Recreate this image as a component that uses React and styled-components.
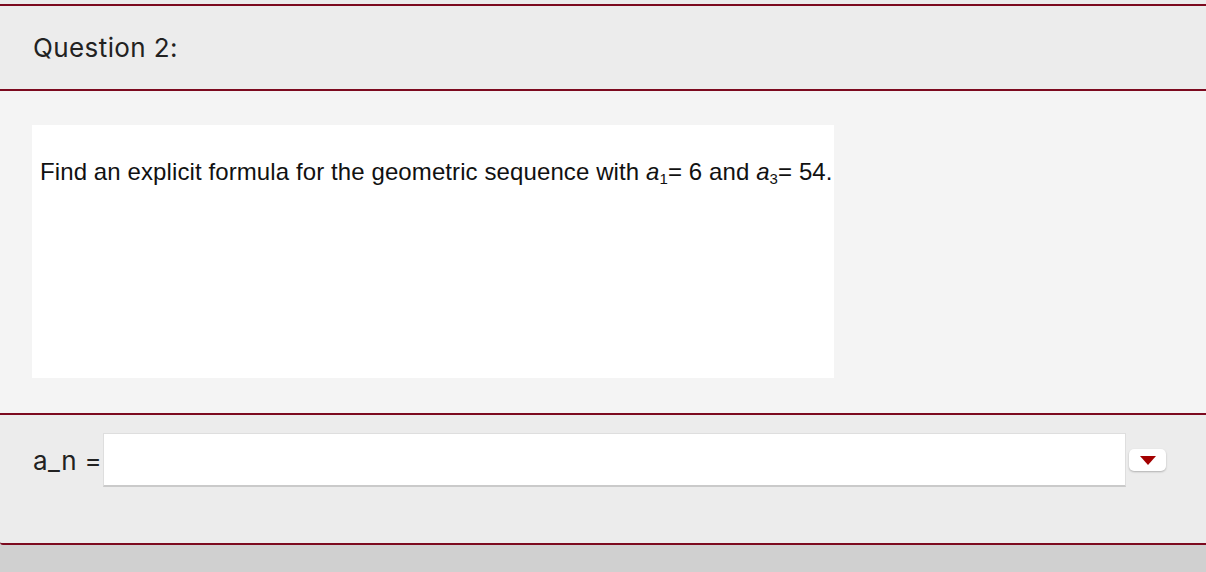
import React from 'react';
import styled, { createGlobalStyle } from 'styled-components';

const GlobalStyle = createGlobalStyle`
  html, body {
    margin: 0;
    padding: 0;
    background: #d0d0d0;
  }
`;

const Page = styled.div`
  min-height: 572px;
  padding-top: 4px;
  background: linear-gradient(to bottom, #ececec 0, #ececec 4px, #d0d0d0 4px);
  box-sizing: border-box;
`;

const Card = styled.section`
  border-top: 2px solid #7c0a1f;
  border-bottom: 2px solid #7c0a1f;
  border-radius: 0 0 0 3px;
  overflow: hidden;
`;

const Header = styled.header`
  height: 83px;
  display: flex;
  align-items: center;
  padding-left: 33px;
  background: #ececec;
  border-bottom: 2px solid #7c0a1f;
  font-family: Inter, 'Noto Sans', sans-serif;
  font-size: 26px;
  letter-spacing: 0.4px;
  color: #222;
`;

const Body = styled.div`
  background: #f4f4f4;
  padding: 34px 0 35px 32px;
  border-bottom: 2px solid #7c0a1f;
`;

const Prompt = styled.div`
  width: 802px;
  height: 253px;
  box-sizing: border-box;
  background: #fff;
  padding: 34px 8px 0;
  font-family: 'Liberation Sans', Arial, sans-serif;
  font-size: 24px;
  letter-spacing: 0.1px;
  color: #111;
  line-height: 26px;
  white-space: nowrap;

  i {
    font-style: italic;
  }
  sub {
    font-size: 15px;
    vertical-align: -4px;
    line-height: 0;
  }
`;

const Footer = styled.div`
  height: 128px;
  box-sizing: border-box;
  background: #ececec;
  padding: 18px 0 0 33px;
  display: flex;
  align-items: flex-start;
`;

const AnswerRow = styled.div`
  display: flex;
  align-items: center;
`;

const Label = styled.span`
  font-family: Inter, 'Noto Sans', sans-serif;
  font-size: 26px;
  letter-spacing: 0.4px;
  color: #222;
  margin-right: 1px;
`;

const AnswerInput = styled.input`
  width: 1023px;
  height: 54px;
  box-sizing: border-box;
  background: #fff;
  border: 1px solid #dedede;
  border-bottom: 2px solid #cacaca;
  outline: none;
  font-size: 20px;
  padding: 0 8px;
`;

const DropButton = styled.button`
  width: 37px;
  height: 22px;
  margin-left: 3px;
  border: none;
  border-radius: 5px;
  background: #fff;
  box-shadow: 0 1px 2px rgba(0, 0, 0, 0.25);
  display: flex;
  align-items: center;
  justify-content: center;
  padding: 0;
  cursor: pointer;
`;

const Caret = styled.span`
  width: 0;
  height: 0;
  border-left: 8px solid transparent;
  border-right: 8px solid transparent;
  border-top: 9px solid #a30000;
`;

export default function App() {
  return (
    <Page>
      <GlobalStyle />
      <Card>
        <Header>Question 2:</Header>
        <Body>
          <Prompt>
            Find an explicit formula for the geometric sequence with <i>a</i>
            <sub>1</sub>= 6 and <i>a</i>
            <sub>3</sub>= 54.
          </Prompt>
        </Body>
        <Footer>
          <AnswerRow>
            <Label>a_n =</Label>
            <AnswerInput type="text" />
            <DropButton aria-label="Open menu">
              <Caret />
            </DropButton>
          </AnswerRow>
        </Footer>
      </Card>
    </Page>
  );
}
